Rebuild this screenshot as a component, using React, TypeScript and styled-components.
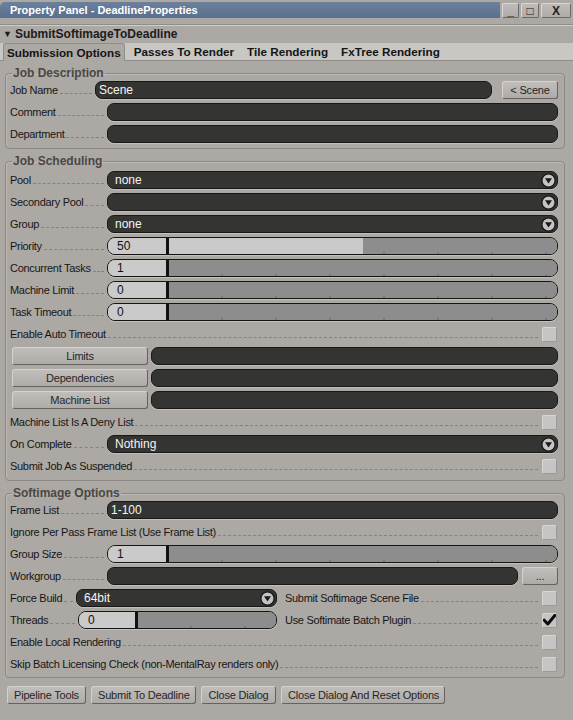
import styled, { createGlobalStyle } from 'styled-components';

const GlobalStyle = createGlobalStyle`
  html, body {
    margin: 0;
    padding: 0;
    background: #aca8a4;
  }
  body {
    font-family: "Liberation Sans", Arial, sans-serif;
    font-size: 11px;
    color: #161616;
  }
`;

const Window = styled.div`
  width: 573px;
  height: 720px;
  background: #aca8a4;
  display: flex;
  flex-direction: column;
  overflow: hidden;
`;

const TitleBar = styled.div`
  display: flex;
  align-items: flex-start;
  height: 18px;
  padding-top: 2px;
  padding-right: 2px;
`;

const TitleText = styled.div`
  flex: 1;
  height: 16px;
  line-height: 16px;
  background: linear-gradient(#6b809d, #5a6f8d);
  border-top-left-radius: 5px;
  color: #ffffff;
  font-weight: bold;
  font-size: 11px;
  padding-left: 10px;
  white-space: nowrap;
`;

const WinButton = styled.div<{ $w: number }>`
  width: ${p => p.$w}px;
  height: 15px;
  box-sizing: border-box;
  margin-left: 2px;
  margin-top: 1px;
  background: linear-gradient(#bdbab7, #aeaba8);
  border: 1px solid;
  border-color: #dad8d6 #6c6966 #6c6966 #dad8d6;
  border-radius: 2px;
  display: flex;
  align-items: center;
  justify-content: center;
  color: #222;
  font-weight: bold;
  font-size: 12px;
`;

const Divider = styled.div`
  margin-top: 4px;
  height: 1px;
  background: #8f8c89;
  border-bottom: 1px solid #cfccc9;
`;

const Header = styled.div`
  height: 16px;
  display: flex;
  align-items: center;
  gap: 3px;
  padding-left: 3px;
  font-weight: bold;
  font-size: 12px;
  color: #1c1c1c;
`;

const Caret = styled.span`
  font-size: 9px;
  line-height: 9px;
`;

const TabStrip = styled.div`
  margin-top: 1px;
  height: 17px;
  background: #c8c7c4;
  border-bottom: 1px solid #8f8c89;
  display: flex;
  align-items: stretch;
  padding-left: 3px;
`;

const Tab = styled.div<{ $active?: boolean }>`
  display: flex;
  align-items: center;
  padding: 0 4px;
  margin-right: 5px;
  font-weight: bold;
  font-size: 11.7px;
  color: #141414;
  white-space: nowrap;
  ${p => p.$active && `
    background: #aca8a4;
    border: 1px solid #8f8c89;
    border-bottom: none;
    border-top-left-radius: 3px;
    border-top-right-radius: 3px;
    margin-bottom: -1px;
    padding: 0 3px;
  `}
`;

const Group = styled.fieldset<{ $top?: number; $bottom?: number }>`
  margin: 5px 8px 0 5px;
  padding: ${p => p.$top ?? 1}px 6px ${p => p.$bottom ?? 5}px 4px;
  border: 1px solid #8b8885;
  border-radius: 4px;
  box-shadow: inset 1px 1px 0 #bdbab7;
  min-width: 0;
`;

const Legend = styled.legend`
  font-weight: bold;
  font-size: 12px;
  line-height: 14px;
  color: #4a4744;
  padding: 0 1px;
  margin-left: 2px;
`;

const Row = styled.div`
  display: flex;
  align-items: center;
  height: 18px;
  & + & {
    margin-top: 4px;
  }
`;

const Half = styled.div<{ $w?: number }>`
  display: flex;
  align-items: center;
  height: 18px;
  ${p => (p.$w ? `width: ${p.$w}px; flex: none;` : 'flex: 1;')}
`;

const Label = styled.div<{ $w?: number; $gap?: number }>`
  display: flex;
  align-items: baseline;
  ${p => (p.$w ? `width: ${p.$w}px; flex: none;` : 'flex: 1;')}
  margin-right: ${p => p.$gap ?? 3}px;
  white-space: nowrap;
  letter-spacing: -0.3px;
  &::after {
    content: '';
    flex: 1;
    min-width: 3px;
    margin-left: 2px;
    border-bottom: 1px dashed #86837f;
  }
`;

const Field = styled.div<{ $pad?: number }>`
  flex: 1;
  height: 18px;
  box-sizing: border-box;
  background: #343433;
  border: 1px solid #181818;
  border-radius: 7px;
  box-shadow: 0 1px 0 #c2bfbc;
  color: #f4f4f4;
  font-size: 12px;
  padding-left: ${p => p.$pad ?? 6}px;
  padding-right: 1px;
  display: flex;
  align-items: center;
  justify-content: space-between;
  white-space: nowrap;
`;

const Slider = styled.div`
  flex: 1;
  height: 18px;
  box-sizing: border-box;
  border: 1px solid #151515;
  border-radius: 8px;
  overflow: hidden;
  display: flex;
  box-shadow: 0 1px 0 #c2bfbc;
`;

const SliderValue = styled.div<{ $w: number }>`
  width: ${p => p.$w}px;
  flex: none;
  box-sizing: border-box;
  background: #cacaca;
  border-right: 3px solid #111;
  color: #111;
  font-size: 12px;
  padding-left: 9px;
  display: flex;
  align-items: center;
`;

const SliderTrack = styled.div`
  flex: 1;
  display: flex;
  background:
    repeating-linear-gradient(90deg, transparent 0 52px, #7a7a7a 52px 54px) bottom / 100% 2px no-repeat,
    #8d8d8d;
`;

const SliderFill = styled.div<{ $pct: number }>`
  width: ${p => p.$pct}%;
  background: #cacaca;
`;

const Button = styled.button<{ $w?: number }>`
  ${p => (p.$w ? `width: ${p.$w}px; flex: none;` : '')}
  height: 18px;
  box-sizing: border-box;
  padding: 0 6px;
  font-family: "Liberation Sans", Arial, sans-serif;
  font-size: 11px;
  letter-spacing: -0.2px;
  color: #262626;
  background: linear-gradient(#c0bdba, #aeaba8);
  border: 1px solid;
  border-color: #d4d2d0 #66635f #66635f #d4d2d0;
  border-radius: 3px;
  white-space: nowrap;
`;

const Check = styled.div`
  width: 15px;
  height: 15px;
  flex: none;
  box-sizing: border-box;
  background: #c7c5c3;
  border: 1px solid;
  border-color: #d9d7d5 #9b9895 #9b9895 #d9d7d5;
  border-radius: 2px;
  display: flex;
  align-items: center;
  justify-content: center;
  margin-right: 1px;
`;

const ButtonBar = styled.div`
  display: flex;
  gap: 5px;
  padding: 8px 0 0 7px;
`;

const Arrow = () => (
  <svg width="15" height="15" viewBox="0 0 15 15">
    <circle cx="7.5" cy="7.5" r="6.6" fill="#c4c4c4" stroke="#1a1a1a" strokeWidth="1.3" />
    <path d="M4 5.2 L11 5.2 L7.5 10.6 Z" fill="#1a1a1a" />
  </svg>
);

const Tick = () => (
  <svg width="13" height="12" viewBox="0 0 13 12">
    <path
      d="M1.2 6.2 L4.8 10 L11.8 1.5"
      fill="none"
      stroke="#0d0d0d"
      strokeWidth="3"
      strokeLinecap="round"
      strokeLinejoin="round"
    />
  </svg>
);

const CheckBox = ({ checked }: { checked?: boolean }) => <Check>{checked && <Tick />}</Check>;

const Dropdown = ({ value }: { value?: string }) => (
  <Field $pad={7}>
    <span>{value}</span>
    <Arrow />
  </Field>
);

const NumSlider = ({ value, pct = 0, box = 61 }: { value: string; pct?: number; box?: number }) => (
  <Slider>
    <SliderValue $w={box}>{value}</SliderValue>
    <SliderTrack>
      <SliderFill $pct={pct} />
    </SliderTrack>
  </Slider>
);

const CheckRow = ({ label, checked }: { label: string; checked?: boolean }) => (
  <Row>
    <Label $gap={4}>{label}</Label>
    <CheckBox checked={checked} />
  </Row>
);

export default function App() {
  return (
    <Window>
      <GlobalStyle />
      <TitleBar>
        <TitleText>Property Panel - DeadlineProperties</TitleText>
        <WinButton $w={17}>_</WinButton>
        <WinButton $w={18}>□</WinButton>
        <WinButton $w={30}>X</WinButton>
      </TitleBar>
      <Divider />
      <Header>
        <Caret>▼</Caret>
        SubmitSoftimageToDeadline
      </Header>
      <TabStrip>
        <Tab $active>Submission Options</Tab>
        <Tab>Passes To Render</Tab>
        <Tab>Tile Rendering</Tab>
        <Tab>FxTree Rendering</Tab>
      </TabStrip>

      <Group $bottom={5}>
        <Legend>Job Description</Legend>
        <Row>
          <Label $w={82}>Job Name</Label>
          <Field $pad={3}>Scene</Field>
          <Button $w={56} style={{ marginLeft: 10 }}>&lt; Scene</Button>
        </Row>
        <Row>
          <Label $w={94}>Comment</Label>
          <Field />
        </Row>
        <Row>
          <Label $w={94}>Department</Label>
          <Field />
        </Row>
      </Group>

      <Group $top={3} $bottom={5}>
        <Legend>Job Scheduling</Legend>
        <Row>
          <Label $w={94}>Pool</Label>
          <Dropdown value="none" />
        </Row>
        <Row>
          <Label $w={94}>Secondary Pool</Label>
          <Dropdown />
        </Row>
        <Row>
          <Label $w={94}>Group</Label>
          <Dropdown value="none" />
        </Row>
        <Row>
          <Label $w={94}>Priority</Label>
          <NumSlider value="50" pct={50} />
        </Row>
        <Row>
          <Label $w={94}>Concurrent Tasks</Label>
          <NumSlider value="1" />
        </Row>
        <Row>
          <Label $w={94}>Machine Limit</Label>
          <NumSlider value="0" />
        </Row>
        <Row>
          <Label $w={94}>Task Timeout</Label>
          <NumSlider value="0" />
        </Row>
        <CheckRow label="Enable Auto Timeout" />
        <Row>
          <Button $w={136} style={{ marginLeft: 2, marginRight: 3 }}>Limits</Button>
          <Field />
        </Row>
        <Row>
          <Button $w={136} style={{ marginLeft: 2, marginRight: 3 }}>Dependencies</Button>
          <Field />
        </Row>
        <Row>
          <Button $w={136} style={{ marginLeft: 2, marginRight: 3 }}>Machine List</Button>
          <Field />
        </Row>
        <CheckRow label="Machine List Is A Deny List" />
        <Row>
          <Label $w={94}>On Complete</Label>
          <Dropdown value="Nothing" />
        </Row>
        <CheckRow label="Submit Job As Suspended" />
      </Group>

      <Group $bottom={4}>
        <Legend>Softimage Options</Legend>
        <Row>
          <Label $w={94}>Frame List</Label>
          <Field $pad={3}>1-100</Field>
        </Row>
        <CheckRow label="Ignore Per Pass Frame List (Use Frame List)" />
        <Row>
          <Label $w={94}>Group Size</Label>
          <NumSlider value="1" />
        </Row>
        <Row>
          <Label $w={94}>Workgroup</Label>
          <Field />
          <Button $w={36} style={{ marginLeft: 4 }}>...</Button>
        </Row>
        <Row>
          <Half $w={267}>
            <Label $w={63}>Force Build</Label>
            <Dropdown value="64bit" />
          </Half>
          <Half style={{ marginLeft: 8 }}>
            <Label $gap={4}>Submit Softimage Scene File</Label>
            <CheckBox />
          </Half>
        </Row>
        <Row>
          <Half $w={267}>
            <Label $w={65}>Threads</Label>
            <NumSlider value="0" box={59} />
          </Half>
          <Half style={{ marginLeft: 8 }}>
            <Label $gap={4}>Use Softimate Batch Plugin</Label>
            <CheckBox checked />
          </Half>
        </Row>
        <CheckRow label="Enable Local Rendering" />
        <CheckRow label="Skip Batch Licensing Check (non-MentalRay renders only)" />
      </Group>

      <ButtonBar>
        <Button $w={79}>Pipeline Tools</Button>
        <Button $w={105}>Submit To Deadline</Button>
        <Button $w={75}>Close Dialog</Button>
        <Button $w={164}>Close Dialog And Reset Options</Button>
      </ButtonBar>
    </Window>
  );
}
